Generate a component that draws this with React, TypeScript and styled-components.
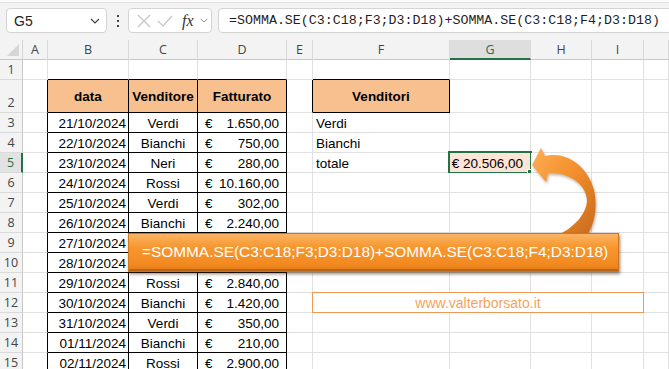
import React from 'react';
import styled, { createGlobalStyle } from 'styled-components';

const GREEN = '#217346';
const GRID = '#e1e1e1';
const ORANGE_FILL = '#f8c08f';
const LETTERS = ['A', 'B', 'C', 'D', 'E', 'F', 'G', 'H', 'I', 'J'];
const ROW_HEIGHTS = [20, 33, 20, 20, 20, 20, 20, 20, 20, 20, 20, 20, 20, 20, 20];
const FORMULA = '=SOMMA.SE(C3:C18;F3;D3:D18)+SOMMA.SE(C3:C18;F4;D3:D18)';

interface Sale {
  date: string;
  seller: string;
  amount: string;
}

// rows 9 and 10 sit under the callout, only their dates show
const sales: Sale[] = [
  { date: '21/10/2024', seller: 'Verdi', amount: '1.650,00' },
  { date: '22/10/2024', seller: 'Bianchi', amount: '750,00' },
  { date: '23/10/2024', seller: 'Neri', amount: '280,00' },
  { date: '24/10/2024', seller: 'Rossi', amount: '10.160,00' },
  { date: '25/10/2024', seller: 'Verdi', amount: '302,00' },
  { date: '26/10/2024', seller: 'Bianchi', amount: '2.240,00' },
  { date: '27/10/2024', seller: '', amount: '' },
  { date: '28/10/2024', seller: '', amount: '' },
  { date: '29/10/2024', seller: 'Rossi', amount: '2.840,00' },
  { date: '30/10/2024', seller: 'Bianchi', amount: '1.420,00' },
  { date: '31/10/2024', seller: 'Verdi', amount: '350,00' },
  { date: '01/11/2024', seller: 'Bianchi', amount: '210,00' },
  { date: '02/11/2024', seller: 'Rossi', amount: '2.900,00' },
];

const GlobalStyle = createGlobalStyle`
  body {
    margin: 0;
    background: #fff;
    font-family: "Liberation Sans", Arial, sans-serif;
  }
`;

const Frame = styled.div`
  position: relative;
  width: 669px;
  height: 369px;
  overflow: hidden;
  background: #fff;
`;

/* ---------- formula bar ---------- */

const FormulaBar = styled.div`
  box-sizing: border-box;
  width: 700px;
  height: 40px;
  display: flex;
  align-items: flex-start;
  padding: 6px 0 0 6px;
  background: #f3f3f3;
  border-top: 2px solid #fbfbfb;
  box-shadow: inset 0 1px 0 #e2e2e2;
`;

const Box = styled.div`
  box-sizing: border-box;
  height: 25px;
  display: flex;
  align-items: center;
  background: #fff;
  border: 1px solid #d4d4d4;
  border-radius: 4px;
`;

const NameBox = styled(Box)`
  width: 101px;
  justify-content: space-between;
  padding: 0 6px 0 7px;
  font-size: 14px;
  color: #222;
`;

const Grip = styled.div`
  width: 21px;
  height: 25px;
  display: flex;
  flex-direction: column;
  align-items: center;
  justify-content: center;
  gap: 3px;

  span {
    width: 2px;
    height: 2px;
    background: #444;
  }
`;

const FxBox = styled(Box)`
  width: 84px;
  padding: 0 3px 0 8px;
  gap: 6px;
`;

const Fx = styled.span`
  font-family: "Liberation Serif", "Times New Roman", serif;
  font-style: italic;
  font-size: 16px;
  color: #333;
  margin-left: 3px;
`;

const FormulaInput = styled(Box)`
  flex: 1;
  margin-left: 6px;
  padding-left: 10px;
  font-family: "Liberation Mono", "Courier New", monospace;
  font-size: 13.3px;
  color: #1f1f1f;
  white-space: nowrap;
`;

/* ---------- sheet ---------- */

const Sheet = styled.div`
  display: grid;
  grid-template-columns: 23px 25px 81px 69px 89px 26px 137px 81px 61px 52px 1fr;
  grid-template-rows: 20px ${ROW_HEIGHTS.map((h) => `${h}px`).join(' ')};
  font-size: 13.5px;
`;

const Corner = styled.div`
  position: relative;
  box-sizing: border-box;
  background: #f3f3f3;
  border-right: 1px solid #d4d4d4;
  border-bottom: 1px solid #c8c8c8;

  &::after {
    content: '';
    position: absolute;
    right: 3px;
    bottom: 3px;
    width: 12px;
    height: 12px;
    background: #d6d6d6;
    clip-path: polygon(100% 0, 100% 100%, 0 100%);
  }
`;

const ColHead = styled.div<{ $active?: boolean }>`
  box-sizing: border-box;
  display: flex;
  align-items: center;
  justify-content: center;
  font-family: "Open Sans", "Liberation Sans", sans-serif;
  font-size: 12.5px;
  color: ${(p) => (p.$active ? GREEN : '#444')};
  background: ${(p) => (p.$active ? '#dedede' : '#f3f3f3')};
  border-right: 1px solid #d8d8d8;
  border-bottom: ${(p) => (p.$active ? `2px solid ${GREEN}` : '1px solid #c8c8c8')};
`;

const RowHead = styled.div<{ $active?: boolean }>`
  box-sizing: border-box;
  display: flex;
  align-items: flex-end;
  justify-content: center;
  padding-bottom: 1px;
  font-family: "Open Sans", "Liberation Sans", sans-serif;
  font-size: 12.5px;
  color: ${(p) => (p.$active ? GREEN : '#444')};
  background: ${(p) => (p.$active ? '#e2e2e2' : '#f3f3f3')};
  border-bottom: 1px solid #dadada;
  border-right: ${(p) => (p.$active ? `2px solid ${GREEN}` : '1px solid #c8c8c8')};
`;

type Align = 'left' | 'center' | 'right' | 'split';

interface CellStyle {
  $align?: Align;
  $fill?: string;
  $bold?: boolean;
  $right?: string;
  $bottom?: string;
}

const justify = (a?: Align) =>
  a === 'center' ? 'center' : a === 'right' ? 'flex-end' : a === 'split' ? 'space-between' : 'flex-start';

const Cell = styled.div<CellStyle>`
  position: relative;
  box-sizing: border-box;
  display: flex;
  align-items: center;
  justify-content: ${(p) => justify(p.$align)};
  padding: 1px ${(p) => (p.$align === 'split' || p.$align === 'right' ? '7px' : '3px')} 0;
  background: ${(p) => p.$fill || '#fff'};
  border-right: 1px solid ${(p) => p.$right || GRID};
  border-bottom: 1px solid ${(p) => p.$bottom || GRID};
  font-weight: ${(p) => (p.$bold ? 700 : 400)};
  color: #000;
  white-space: nowrap;
`;

const DateCell = styled(Cell)`
  padding-right: 2px;
`;

const Selection = styled.span`
  position: absolute;
  top: -2px;
  left: -2px;
  right: -2px;
  bottom: -2px;
  border: 2px solid ${GREEN};
  pointer-events: none;

  &::after {
    content: '';
    position: absolute;
    right: -5px;
    bottom: -5px;
    width: 6px;
    height: 6px;
    background: ${GREEN};
    border: 1px solid #fff;
  }
`;

const Watermark = styled.div`
  position: relative;
  z-index: 1;
  grid-column: span 4;
  box-sizing: border-box;
  margin: -1px 0 0 -1px;
  display: flex;
  align-items: center;
  justify-content: center;
  background: #fff;
  border: 1px solid #ee9a55;
  color: #f5a35c;
  font-size: 14px;
`;

/* ---------- overlays ---------- */

const Callout = styled.div`
  position: absolute;
  left: 128px;
  top: 233px;
  width: 491px;
  height: 39px;
  box-sizing: border-box;
  display: flex;
  align-items: center;
  padding: 0 0 2px 13px;
  background: linear-gradient(#fbb465 0%, #f7972f 35%, #f28a20 80%, #e47c18 100%);
  border: 1px solid #d27417;
  box-shadow: inset 0 -2px 0 #b9651a, 1px 2px 3px rgba(60, 30, 0, 0.55);
  color: #fff;
  font-size: 15.4px;
  white-space: nowrap;
`;

const ArrowSvg = styled.svg`
  position: absolute;
  left: 520px;
  top: 140px;
  filter: drop-shadow(1px 2px 1.5px rgba(80, 40, 0, 0.35));
`;

/* ---------- icons ---------- */

const Chevron = ({ size = 10, color = '#444' }: { size?: number; color?: string }) => (
  <svg width={size} height={size * 0.6} viewBox="0 0 10 6">
    <path d="M1 1 L5 5 L9 1" fill="none" stroke={color} strokeWidth="1.2" />
  </svg>
);

const CrossIcon = () => (
  <svg width="14" height="14" viewBox="0 0 14 14">
    <path d="M1 1 L13 13 M13 1 L1 13" stroke="#c4c4c4" strokeWidth="1.2" />
  </svg>
);

const CheckIcon = () => (
  <svg width="16" height="12" viewBox="0 0 16 12">
    <path d="M1 6 L6 11 L15 1" fill="none" stroke="#c4c4c4" strokeWidth="1.2" />
  </svg>
);

const CurvedArrow = () => (
  <ArrowSvg width="110" height="100" viewBox="0 0 110 100">
    <defs>
      <linearGradient id="arrowFill" x1="0" y1="0" x2="1" y2="1">
        <stop offset="0" stopColor="#fdae55" />
        <stop offset="0.45" stopColor="#f4902c" />
        <stop offset="1" stopColor="#c9691c" />
      </linearGradient>
    </defs>
    <path
      d="M12 25 L21 8 L25 16 C46 11 67 25 74 50 C78 68 74 85 67 95 L38 95 C53 88 66 75 67 61 C67 45 50 32 28 33 L26 42 Z"
      fill="url(#arrowFill)"
    />
  </ArrowSvg>
);

/* ---------- cell contents ---------- */

const inTable = (r: number, c: number) => r >= 2 && c >= 1 && c <= 3;

function renderCell(r: number, c: number) {
  const letter = LETTERS[c];
  let right: string | undefined;
  let bottom: string | undefined;
  if (inTable(r, c)) {
    right = '#000';
    bottom = '#000';
  }
  if (r >= 2 && c === 0) right = '#000';
  if (r === 1 && c >= 1 && c <= 3) bottom = '#000';
  if (r === 2 && c === 5) {
    right = '#000';
    bottom = '#000';
  }
  if (r === 2 && c === 4) right = '#000';
  if (r === 1 && c === 5) bottom = '#000';

  const key = `${letter}${r}`;

  if (r === 2 && c >= 1 && c <= 3) {
    const label = ['data', 'Venditore', 'Fatturato'][c - 1];
    return (
      <Cell key={key} $align="center" $bold $fill={ORANGE_FILL} $right={right} $bottom={bottom}>
        {label}
      </Cell>
    );
  }
  if (r === 2 && c === 5) {
    return (
      <Cell key={key} $align="center" $bold $fill={ORANGE_FILL} $right={right} $bottom={bottom}>
        Venditori
      </Cell>
    );
  }

  const sale = r >= 3 ? sales[r - 3] : undefined;
  if (sale && c === 1) {
    return (
      <DateCell key={key} $align="right" $right={right} $bottom={bottom}>
        {sale.date}
      </DateCell>
    );
  }
  if (sale && c === 2) {
    return (
      <Cell key={key} $align="center" $right={right} $bottom={bottom}>
        {sale.seller}
      </Cell>
    );
  }
  if (sale && c === 3) {
    return (
      <Cell key={key} $align="split" $right={right} $bottom={bottom}>
        {sale.amount && <span>€</span>}
        <span>{sale.amount}</span>
      </Cell>
    );
  }

  if (c === 5 && r >= 3 && r <= 5) {
    return (
      <Cell key={key} $right={right} $bottom={bottom}>
        {['Verdi', 'Bianchi', 'totale'][r - 3]}
      </Cell>
    );
  }
  if (c === 6 && r === 5) {
    return (
      <Cell key={key} $align="right" $fill="#fce4d6">
        € 20.506,00
        <Selection />
      </Cell>
    );
  }

  return <Cell key={key} $right={right} $bottom={bottom} />;
}

function renderRow(r: number) {
  const cells: React.ReactNode[] = [
    <RowHead key={`h${r}`} $active={r === 5}>
      {r}
    </RowHead>,
  ];
  LETTERS.forEach((_, c) => {
    if (r === 12 && c >= 5 && c <= 8) {
      if (c === 5) cells.push(<Watermark key="wm">www.valterborsato.it</Watermark>);
      return;
    }
    cells.push(renderCell(r, c));
  });
  return cells;
}

export default function App() {
  return (
    <Frame>
      <GlobalStyle />
      <FormulaBar>
        <NameBox>
          <span>G5</span>
          <Chevron />
        </NameBox>
        <Grip>
          <span />
          <span />
          <span />
        </Grip>
        <FxBox>
          <CrossIcon />
          <CheckIcon />
          <Fx>fx</Fx>
          <Chevron size={8} color="#888" />
        </FxBox>
        <FormulaInput>{FORMULA}</FormulaInput>
      </FormulaBar>

      <Sheet>
        <Corner />
        {LETTERS.map((l) => (
          <ColHead key={l} $active={l === 'G'}>
            {l === 'J' ? '' : l}
          </ColHead>
        ))}
        {ROW_HEIGHTS.map((_, i) => renderRow(i + 1))}
      </Sheet>

      <CurvedArrow />
      <Callout>{FORMULA}</Callout>
    </Frame>
  );
}
